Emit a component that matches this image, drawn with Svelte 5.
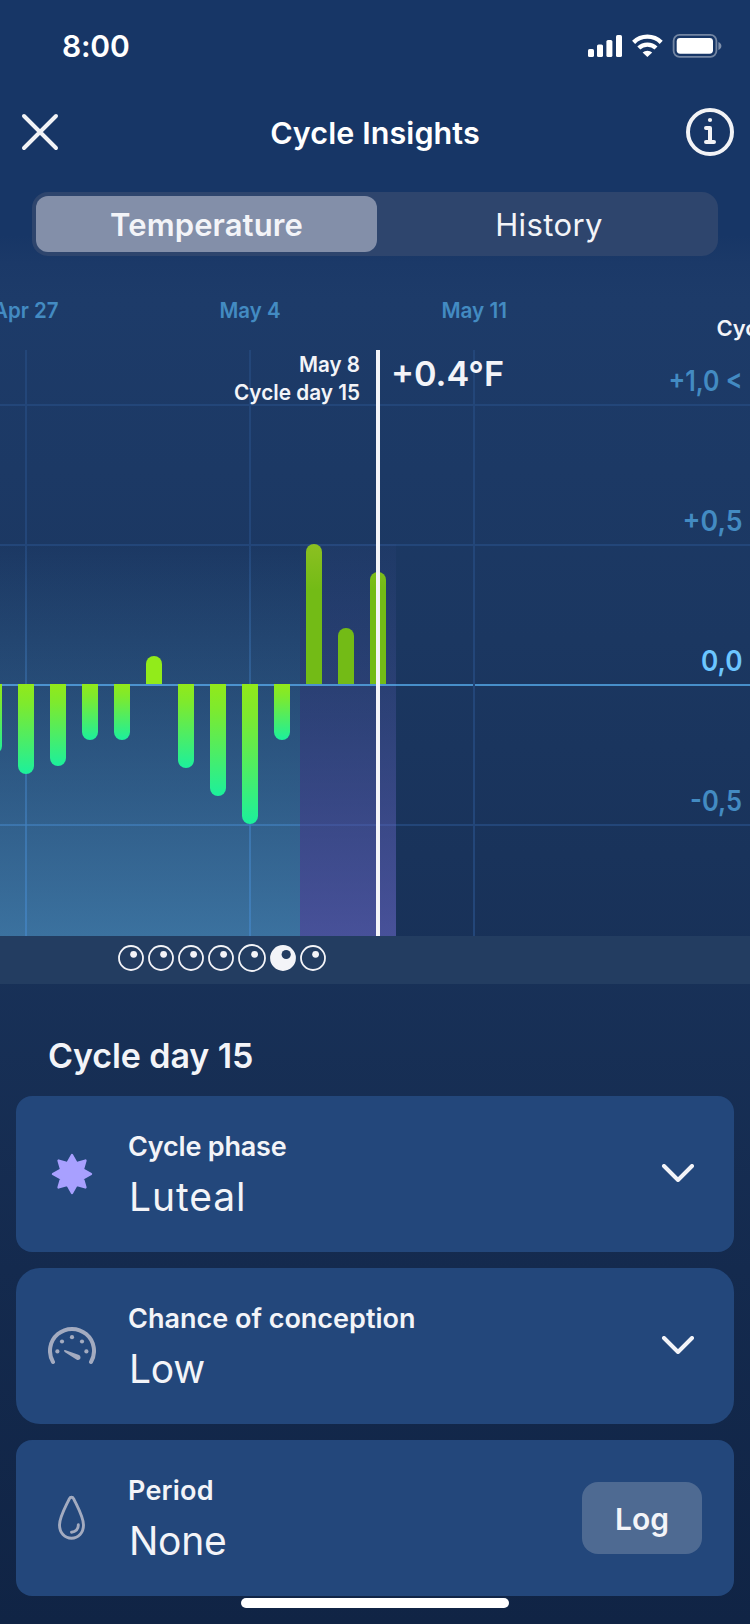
<script>
  const weeks = [
    { label: 'Apr 27', x: 26, from: -7, width: 65.5 },
    { label: 'May 4', x: 250, from: 219.5, width: 61 },
    { label: 'May 11', x: 474, from: 441.5, width: 65.5 }
  ];

  const gridLines = [405, 545, 825];

  const scale = [
    { label: '+1,0 <', from: 668.5, width: 74, y: 390.5 },
    { label: '+0,5', from: 682.5, width: 60, y: 530.5 },
    { label: '0,0', from: 701, width: 41.5, y: 670.5, zero: true },
    { label: '-0,5', from: 690, width: 52, y: 810.5 }
  ];

  const zero = 684;
  const bars = [
    { x: -14, end: 754 },
    { x: 18, end: 774 },
    { x: 50, end: 766 },
    { x: 82, end: 740 },
    { x: 114, end: 740 },
    { x: 146, end: 656 },
    { x: 178, end: 768 },
    { x: 210, end: 796 },
    { x: 242, end: 824 },
    { x: 274, end: 740 },
    { x: 306, end: 544, luteal: true },
    { x: 338, end: 628, luteal: true },
    { x: 370, end: 572, luteal: true }
  ];

  function barPath({ x, end }) {
    const up = end < zero;
    const shoulder = up ? end + 8 : end - 8;
    return `M${x} ${zero}V${shoulder}a8 8 0 0 ${up ? 1 : 0} 16 0V${zero}z`;
  }

  function barFill(bar) {
    if (bar.luteal) return 'url(#luteal-bar)';
    return bar.end < zero ? '#92eb1a' : 'url(#low-bar)';
  }

  const tests = [
    { x: 131, r: 12 },
    { x: 161, r: 12 },
    { x: 191, r: 12 },
    { x: 221, r: 12 },
    { x: 252, r: 13 },
    { x: 283, r: 12, peak: true },
    { x: 313, r: 12 }
  ];

  const star = Array.from({ length: 16 }, (_, i) => {
    const r = i % 2 ? 11.8 : 19;
    const a = (i * Math.PI) / 8;
    return `${24 + r * Math.sin(a)},${24 - r * Math.cos(a)}`;
  }).join(' ');

  const cards = [
    { title: 'Cycle phase', value: 'Luteal', icon: 'star', titleSpacing: -0.2, valueSpacing: 0.9 },
    { title: 'Chance of conception', value: 'Low', icon: 'gauge', round: true, titleSpacing: 0, valueSpacing: -0.3 },
    { title: 'Period', value: 'None', icon: 'drop', log: true, titleSpacing: 0.2, valueSpacing: -0.3 }
  ];
</script>

<div class="screen">
  <div class="status">
    <span class="time">8:00</span>
    <svg class="signals" width="136" height="28" viewBox="587 31 136 28" fill="#fff">
      <rect x="588" y="49" width="6" height="8" rx="1.6" />
      <rect x="597" y="44.5" width="6" height="12.5" rx="1.6" />
      <rect x="606.4" y="40" width="6" height="17" rx="1.6" />
      <rect x="616" y="35" width="6" height="22" rx="1.6" />
      <g fill="none" stroke="#fff" stroke-width="4.3">
        <path d="M633.6 42.4a19.6 19.6 0 0 1 27.6 0" />
        <path d="M638.8 48a12.4 12.4 0 0 1 17.2 0" />
      </g>
      <path d="M642.6 52.6a7 7 0 0 1 9.6 0L647.4 57z" />
      <rect x="673.6" y="34.8" width="42.8" height="22" rx="6" fill="none" stroke="#fff" stroke-opacity=".4" stroke-width="1.8" />
      <rect x="676.7" y="38" width="36.3" height="15.7" rx="3.4" />
      <path d="M718.4 42c4 1.5 4 6.5 0 8z" fill-opacity=".45" />
    </svg>
  </div>

  <header>
    <svg width="48" height="48" viewBox="0 0 48 48" fill="none" stroke="#f2f3f6" stroke-width="4" stroke-linecap="round">
      <path d="M8 8L40 40M40 8L8 40" />
    </svg>
    <h1>Cycle Insights</h1>
    <svg width="48" height="48" viewBox="0 0 48 48" fill="none" stroke="#f2f3f6" stroke-width="4" stroke-linecap="round" stroke-linejoin="round">
      <circle cx="24" cy="24" r="22" />
      <path d="M20 20h4v14M20 34h8" />
      <circle cx="24" cy="12" r="2.1" fill="#f2f3f6" stroke="none" />
    </svg>
  </header>

  <nav>
    <div class="tab active">Temperature</div>
    <div class="tab"><span class="history">History</span></div>
  </nav>

  <svg class="chart" width="750" height="680" viewBox="0 256 750 680">
    <defs>
      <linearGradient id="follicular" x1="0" y1="0" x2="0" y2="1">
        <stop offset="0" stop-color="#4a8dbd" stop-opacity="0" />
        <stop offset="1" stop-color="#4a8dbd" stop-opacity=".7" />
      </linearGradient>
      <linearGradient id="luteal" x1="0" y1="0" x2="0" y2="1">
        <stop offset="0" stop-color="#6766c4" stop-opacity=".04" />
        <stop offset=".36" stop-color="#6766c4" stop-opacity=".2" />
        <stop offset="1" stop-color="#6766c4" stop-opacity=".6" />
      </linearGradient>
      <linearGradient id="tinted-line" gradientUnits="userSpaceOnUse" x1="0" y1="544" x2="0" y2="936">
        <stop offset="0" stop-color="#4486c8" stop-opacity="0" />
        <stop offset="1" stop-color="#4486c8" stop-opacity=".55" />
      </linearGradient>
      <linearGradient id="low-bar" x1="0" y1="0" x2="0" y2="1">
        <stop offset="0" stop-color="#92e91a" />
        <stop offset=".22" stop-color="#7eea2d" />
        <stop offset="1" stop-color="#1cf09c" />
      </linearGradient>
      <linearGradient id="luteal-bar" gradientUnits="userSpaceOnUse" x1="0" y1="544" x2="0" y2="590">
        <stop offset="0" stop-color="#8cc021" />
        <stop offset="1" stop-color="#73bb16" />
      </linearGradient>
    </defs>

    <path d="M0 685H750" stroke="#478fca" stroke-width="2" />
    {#each gridLines as y}
      <path d="M0 {y}H750" stroke="#234679" stroke-width="2" />
    {/each}
    {#each weeks as week}
      <path d="M{week.x} 350V936" stroke="#234679" stroke-width="2" />
      <text class="small blue" x={week.from} y="318" textLength={week.width} lengthAdjust="spacingAndGlyphs">{week.label}</text>
    {/each}

    <rect x="0" y="544" width="300" height="392" fill="url(#follicular)" />
    <rect x="300" y="544" width="96" height="392" fill="url(#luteal)" />
    <rect x="25" y="544" width="2" height="392" fill="url(#tinted-line)" />
    <rect x="249" y="544" width="2" height="392" fill="url(#tinted-line)" />
    <rect x="0" y="824" width="300" height="2" fill="url(#tinted-line)" />
    <path d="M0 685H396" stroke="#4c93cf" stroke-width="2" />
    {#each bars as bar}
      <path d={barPath(bar)} fill={barFill(bar)} />
    {/each}

    <rect x="376" y="350" width="4" height="586" fill="#f3f4f8" />
    <text class="small" x="299" y="372" textLength="61" lengthAdjust="spacingAndGlyphs">May 8</text>
    <text class="small" x="234" y="400" textLength="126" lengthAdjust="spacingAndGlyphs">Cycle day 15</text>
    <text class="reading" x="391" y="386" textLength="113" lengthAdjust="spacingAndGlyphs">+0.4°F</text>
    <text class="small" x="716.5" y="336">Cycle</text>
    {#each scale as s}
      <text class="scale" class:zero={s.zero} x={s.from} y={s.y} textLength={s.width} lengthAdjust="spacingAndGlyphs">{s.label}</text>
    {/each}
  </svg>

  <svg class="tests" width="750" height="48" viewBox="0 936 750 48">
    {#each tests as t}
      <circle cx={t.x} cy="958" r={t.r} fill={t.peak ? '#f3f4f8' : 'none'} stroke="#f3f4f8" stroke-width="1.8" />
      <circle cx={t.x + (t.peak ? 3.2 : 2.6)} cy={t.peak ? 954.5 : 954.3} r={t.peak ? 4.6 : 3.4} fill={t.peak ? '#233d61' : '#f3f4f8'} />
    {/each}
  </svg>

  <h2>Cycle day 15</h2>

  <main>
    {#each cards as card}
      <section class:round={card.round}>
        <svg class="icon" width="48" height="48" viewBox="0 0 48 48" fill="none" stroke="#a3abc0" stroke-linecap="round" stroke-linejoin="round">
          {#if card.icon === 'star'}
            <polygon points={star} fill="#a8a0ff" stroke="#a8a0ff" stroke-width="2.4" />
          {:else if card.icon === 'gauge'}
            <path d="M5 40A22 22 0 1 1 43 40" stroke-width="4" />
            <g fill="#a3abc0" stroke="none">
              <circle cx="9.4" cy="29.4" r="2.1" />
              <circle cx="14" cy="19.5" r="2.1" />
              <circle cx="24" cy="15.2" r="2.1" />
              <circle cx="34" cy="19.5" r="2.1" />
              <circle cx="38.4" cy="29.4" r="2.1" />
              <path d="M17 28.1c-1.6-.5-.8 1.8 0 2.2L28.8 37.8c4 1.2 5.2-3.6 1.6-5z" />
            </g>
          {:else}
            <path d="M21.3 4.8c1-2 3.4-2 4.4 0C29 12 35.5 23 35.5 31c0 7.8-5.2 13.2-12 13.2S11.5 38.8 11.5 31c0-8 6.5-19 9.8-26.2z" stroke-width="2.9" />
            <path d="M30.3 30.8c.2 4.4-2.6 7.3-6.8 7.4" stroke-width="2.9" />
          {/if}
        </svg>
        <div class="copy">
          <div class="title" style:letter-spacing="{card.titleSpacing}px">{card.title}</div>
          <div class="value" style:letter-spacing="{card.valueSpacing}px">{card.value}</div>
        </div>
        {#if card.log}
          <button>Log</button>
        {:else}
          <svg class="chevron" width="34" height="18" viewBox="0 0 34 18" fill="none" stroke="#f3f4f8" stroke-width="4" stroke-linecap="round" stroke-linejoin="round">
            <path d="M3 2L17 16L31 2" />
          </svg>
        {/if}
      </section>
    {/each}
  </main>

  <div class="home"></div>
</div>

<style>
  :global(body) {
    margin: 0;
  }

  .screen {
    width: 750px;
    height: 1624px;
    overflow: hidden;
    display: flex;
    flex-direction: column;
    font-family: Inter, 'Liberation Sans', sans-serif;
    font-weight: 600;
    color: #f3f4f8;
    background: linear-gradient(
      #173666 0,
      #173666 235px,
      #1b3968 262px,
      #1d3b69 300px,
      #1b3761 640px,
      #183158 960px,
      #142a4e 1270px,
      #102445 1624px
    );
  }

  .screen > * {
    flex: none;
  }

  svg {
    display: block;
  }

  .status {
    height: 92px;
    box-sizing: border-box;
    padding: 0 27px 2px 62px;
    display: flex;
    align-items: center;
    justify-content: space-between;
  }

  .time {
    padding-top: 1px;
    font-size: 30px;
    font-weight: 600;
    line-height: 36px;
    letter-spacing: -0.2px;
    color: #fff;
  }

  header {
    height: 80px;
    padding: 0 16px;
    display: flex;
    align-items: center;
    justify-content: space-between;
  }

  h1 {
    margin: 0;
    padding-top: 2px;
    font-size: 30.5px;
    font-weight: 600;
    line-height: 40px;
    letter-spacing: 0.1px;
    color: #fff;
  }

  nav {
    height: 56px;
    margin: 20px 32px 0;
    padding: 4px;
    border-radius: 16px;
    background: #2e456d;
    display: flex;
  }

  .tab {
    flex: 1;
    border-radius: 12px;
    display: flex;
    align-items: center;
    justify-content: center;
    font-size: 31px;
    font-weight: 400;
  }

  .tab.active {
    flex: 0 0 341px;
    background: #838fa9;
    font-weight: 600;
    letter-spacing: 0.1px;
  }

  .history {
    letter-spacing: 0.4px;
    padding-left: 7px;
  }

  text {
    fill: #f3f4f8;
    white-space: pre;
  }

  .small {
    font-size: 22px;
    font-weight: 600;
  }

  .small.blue,
  .scale {
    fill: #438bc2;
  }

  .scale {
    font-size: 28px;
    font-weight: 600;
  }

  .scale.zero {
    fill: #6cc6ff;
  }

  .reading {
    font-size: 34px;
    font-weight: 600;
  }

  .tests {
    background: #233d61;
  }

  h2 {
    margin: 0;
    padding: 48px 48px 16px;
    font-size: 34px;
    font-weight: 600;
    line-height: 48px;
    letter-spacing: -0.1px;
  }

  main {
    padding: 0 16px;
    display: flex;
    flex-direction: column;
    gap: 16px;
  }

  section {
    height: 156px;
    box-sizing: border-box;
    padding: 0 32px;
    border-radius: 16px;
    background: #23477b;
    display: flex;
    align-items: center;
  }

  section.round {
    border-radius: 24px;
  }

  .copy {
    flex: 1;
    padding-top: 1px;
    margin-left: 32px;
    display: flex;
    flex-direction: column;
    gap: 8px;
  }

  .title {
    font-size: 27px;
    line-height: 36px;
  }

  .value {
    padding-left: 1px;
    font-size: 39px;
    font-weight: 400;
    line-height: 48px;
  }

  .chevron {
    margin: 0 7px 2px 0;
  }

  button {
    width: 120px;
    height: 72px;
    padding: 2px 0 0;
    border: 0;
    border-radius: 16px;
    background: #4e6a92;
    color: #f3f4f8;
    font: 600 30px Inter, 'Liberation Sans', sans-serif;
  }

  .home {
    width: 268px;
    height: 10px;
    margin: 2px auto 0;
    border-radius: 5px;
    background: #fff;
  }
</style>
